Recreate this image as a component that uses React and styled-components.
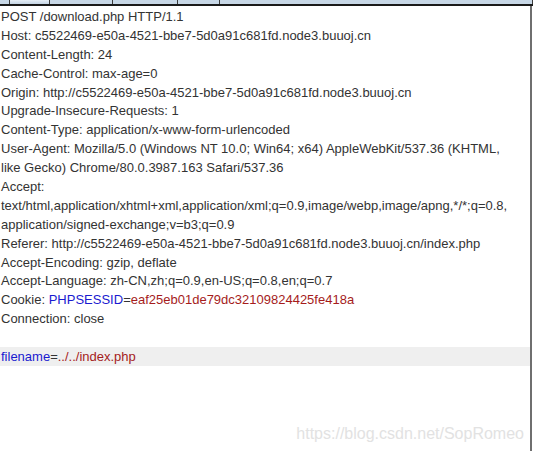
import styled, { createGlobalStyle } from "styled-components";

const Global = createGlobalStyle`
  html, body { margin: 0; padding: 0; background: #fff; }
  body { width: 533px; height: 451px; overflow: hidden; }
`;

const Page = styled.div`
  width: 533px;
  height: 451px;
  display: flex;
  flex-direction: column;
  font-family: "Liberation Sans", Arial, sans-serif;
  position: relative;
`;

const TabStrip = styled.div`
  display: flex;
  height: 4px;
  background: #c7d7e6;
  border-bottom: 2px solid #1a1a1a;
`;

const Tab = styled.div`
  width: ${({ w }) => w}px;
  height: 100%;
  background: ${({ active }) => (active ? "linear-gradient(#e6eef6, #c4d4e4)" : "transparent")};
  border-right: 1px solid #3a3a3a;
`;

const Editor = styled.div`
  flex: 1;
  display: flex;
  flex-direction: column;
  padding-top: 1px;
  border-right: 2px solid #6f6f6f;
  margin-right: 1px;
`;

const Line = styled.div`
  height: 18.9px;
  line-height: 19px;
  padding-left: 1px;
  font-size: 13px;
  color: #333;
  white-space: pre;
  background: ${({ hl }) => (hl ? "#efefef" : "transparent")};
`;

const Key = styled.span`
  color: #1a1ad0;
`;

const Val = styled.span`
  color: #a51c1c;
`;

const Watermark = styled.div`
  position: absolute;
  right: 9px;
  bottom: 8px;
  font-size: 16px;
  color: #e2e2e2;
`;

const headers = [
  "POST /download.php HTTP/1.1",
  "Host: c5522469-e50a-4521-bbe7-5d0a91c681fd.node3.buuoj.cn",
  "Content-Length: 24",
  "Cache-Control: max-age=0",
  "Origin: http://c5522469-e50a-4521-bbe7-5d0a91c681fd.node3.buuoj.cn",
  "Upgrade-Insecure-Requests: 1",
  "Content-Type: application/x-www-form-urlencoded",
  "User-Agent: Mozilla/5.0 (Windows NT 10.0; Win64; x64) AppleWebKit/537.36 (KHTML,",
  "like Gecko) Chrome/80.0.3987.163 Safari/537.36",
  "Accept:",
  "text/html,application/xhtml+xml,application/xml;q=0.9,image/webp,image/apng,*/*;q=0.8,",
  "application/signed-exchange;v=b3;q=0.9",
  "Referer: http://c5522469-e50a-4521-bbe7-5d0a91c681fd.node3.buuoj.cn/index.php",
  "Accept-Encoding: gzip, deflate",
  "Accept-Language: zh-CN,zh;q=0.9,en-US;q=0.8,en;q=0.7",
];

const tabs = [9, 40, 62, 65, 41, 316];

export default function App() {
  return (
    <Page>
      <Global />
      <TabStrip>
        {tabs.map((w, i) => (
          <Tab key={i} w={w} active={i === 1} />
        ))}
      </TabStrip>
      <Editor>
        {headers.map((h, i) => (
          <Line key={i}>{h}</Line>
        ))}
        <Line>
          Cookie: <Key>PHPSESSID</Key>=<Val>eaf25eb01de79dc32109824425fe418a</Val>
        </Line>
        <Line>Connection: close</Line>
        <Line> </Line>
        <Line hl>
          <Key>filename</Key>=<Val>../../index.php</Val>
        </Line>
      </Editor>
      <Watermark>https://blog.csdn.net/SopRomeo</Watermark>
    </Page>
  );
}
